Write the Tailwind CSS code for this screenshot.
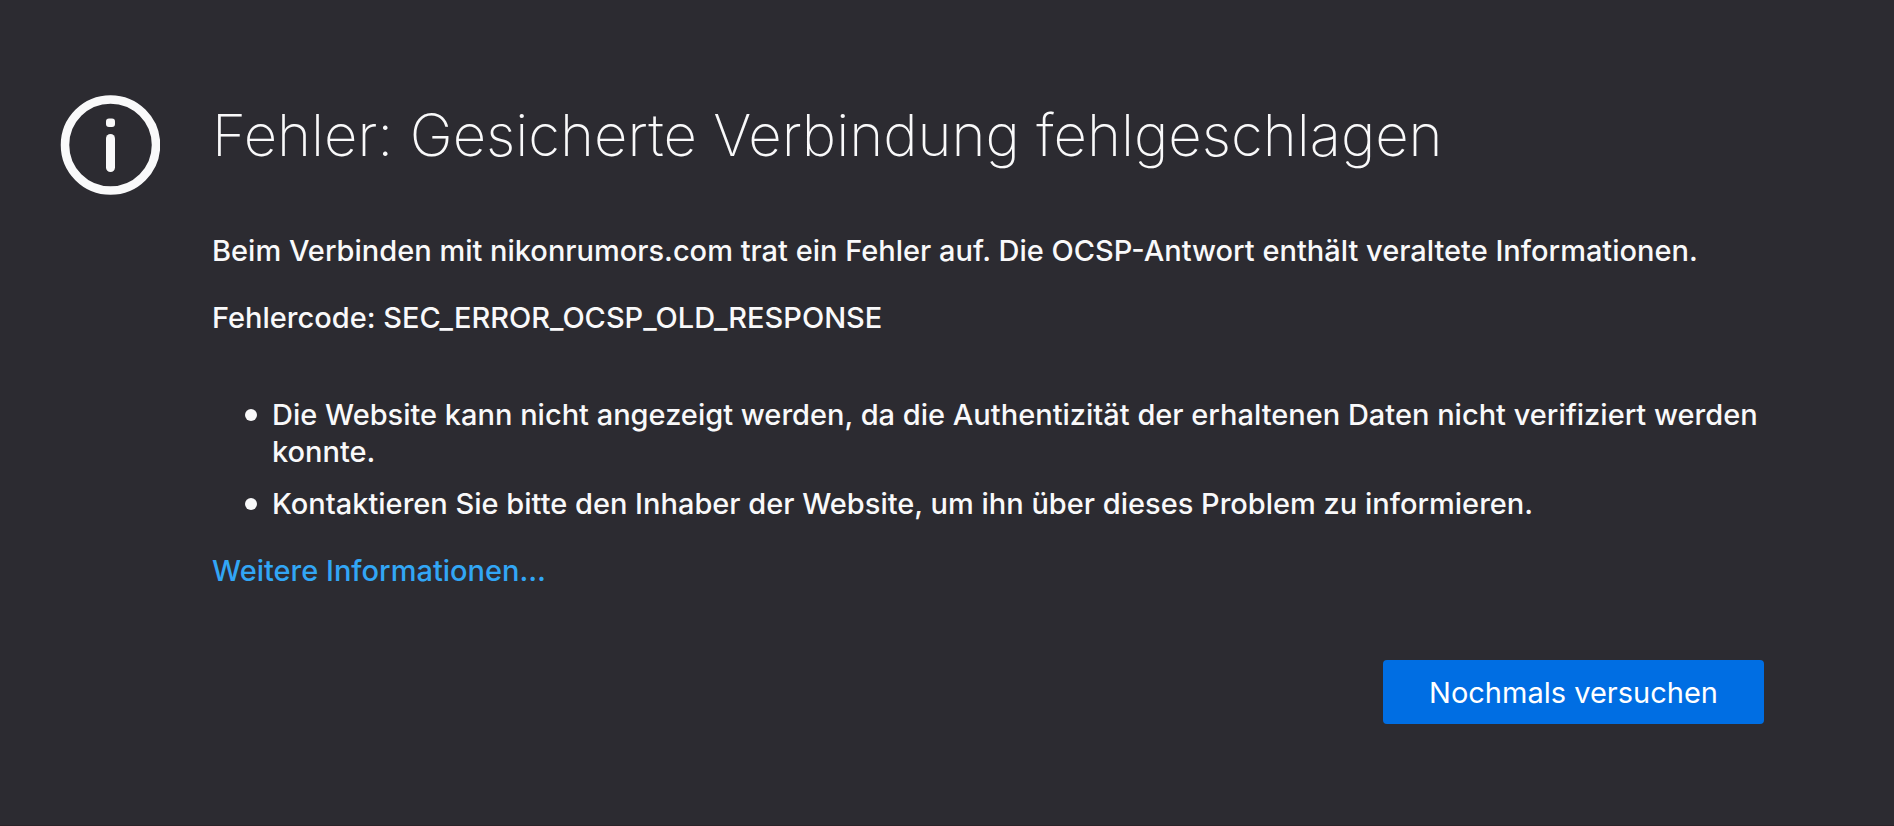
<!DOCTYPE html>
<html lang="de">
<head>
  <meta charset="UTF-8" />
  <meta name="viewport" content="width=device-width, initial-scale=1.0"/>
  <title>Fehler: Gesicherte Verbindung fehlgeschlagen</title>
  <script src="https://cdn.jsdelivr.net/npm/@tailwindcss/browser@4"></script>
</head>
<body class="min-h-screen border-b border-[#2a2328] bg-[#2c2b31] text-[#f9f9fa] font-['Inter','Liberation_Sans',sans-serif] font-medium text-[29px] leading-[37px]">
  <main class="flex items-start gap-[52px] pt-[95px] pb-[60px] pl-[60px] pr-[130px]">
    <!-- Info icon -->
    <svg class="size-[100px] shrink-0" viewBox="0 0 100 100" fill="none" aria-hidden="true">
      <circle cx="50.5" cy="50" r="45.5" stroke="currentColor" stroke-width="8.5" />
      <rect x="46" y="23.5" width="9" height="8.5" rx="3" fill="currentColor" />
      <rect x="46" y="39" width="9" height="38" rx="4.5" fill="currentColor" />
    </svg>

    <div class="flex-1 min-w-0">
      <h1 class="text-[58px] leading-[80px] font-extralight mb-[57px]">Fehler: Gesicherte Verbindung fehlgeschlagen</h1>

      <p class="mb-[30px]">Beim Verbinden mit nikonrumors.com trat ein Fehler auf. Die OCSP-Antwort enthält veraltete Informationen.</p>
      <p class="mb-[60px]">Fehlercode: SEC_ERROR_OCSP_OLD_RESPONSE</p>

      <ul class="pl-[33px] mb-[30px] space-y-[15px]">
        <li class="flex gap-[15px] before:size-3 before:mt-[13px] before:shrink-0 before:rounded-full before:bg-current">Die Website kann nicht angezeigt werden, da die Authentizität der erhaltenen Daten nicht verifiziert werden konnte.</li>
        <li class="flex gap-[15px] before:size-3 before:mt-[13px] before:shrink-0 before:rounded-full before:bg-current">Kontaktieren Sie bitte den Inhaber der Website, um ihn über dieses Problem zu informieren.</li>
      </ul>

      <p><a href="#" class="text-[#32a6f5] hover:underline">Weitere Informationen…</a></p>

      <div class="flex justify-end mt-[71px]">
        <button type="button" class="min-w-[381px] h-16 px-10 rounded-[4px] bg-[#006ee3] hover:bg-[#005bbf] text-white font-normal">Nochmals versuchen</button>
      </div>
    </div>
  </main>
</body>
</html>
